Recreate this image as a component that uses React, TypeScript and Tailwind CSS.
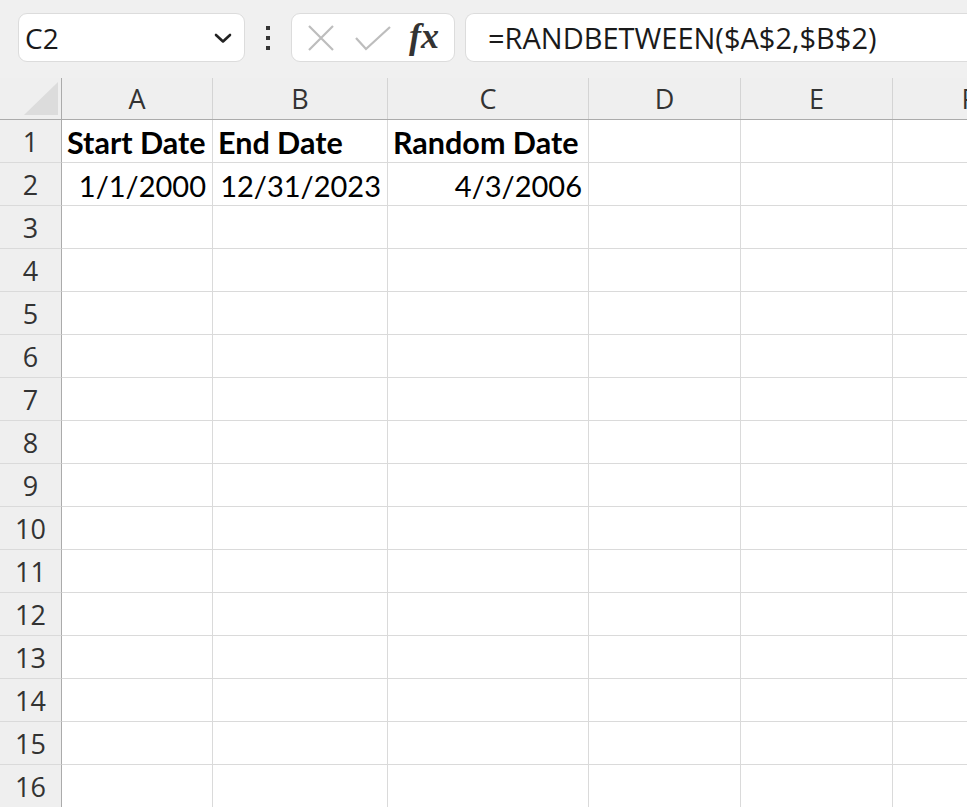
import React from "react";

const cols = [
  { name: "A", w: 151 },
  { name: "B", w: 175 },
  { name: "C", w: 201 },
  { name: "D", w: 152 },
  { name: "E", w: 152 },
  { name: "F", w: 152 },
];

const ui = { fontFamily: '"Open Sans", "Noto Sans", sans-serif' };
const cellFont = { fontFamily: 'Lato, "Open Sans", sans-serif' };

type Cell = { text: string; bold?: boolean; right?: boolean };

const data: Record<number, Cell[]> = {
  1: [
    { text: "Start Date", bold: true },
    { text: "End Date", bold: true },
    { text: "Random Date", bold: true },
  ],
  2: [
    { text: "1/1/2000", right: true },
    { text: "12/31/2023", right: true },
    { text: "4/3/2006", right: true },
  ],
};

function Toolbar() {
  return (
    <div className="h-[78px] bg-[#f0f0f0] flex items-start pt-[13px] pl-[18px]" style={ui}>
      <div className="w-[227px] h-[49px] bg-white border border-[#dcdcdc] rounded-[9px] flex items-center justify-between pl-[6px] pr-[12px]">
        <span className="text-[28px] text-[#1a1a1a] leading-none">C2</span>
        <svg width="18" height="12" viewBox="0 0 18 12">
          <path d="M2 3 L9 9.5 L16 3" fill="none" stroke="#222" strokeWidth="2.6" strokeLinecap="round" strokeLinejoin="round" />
        </svg>
      </div>
      <div className="w-[46px] h-[49px] flex flex-col items-center justify-center gap-[6px]">
        <span className="w-[4px] h-[4px] bg-[#333]" />
        <span className="w-[4px] h-[4px] bg-[#333]" />
        <span className="w-[4px] h-[4px] bg-[#333]" />
      </div>
      <div className="w-[164px] h-[49px] bg-white border border-[#dcdcdc] rounded-[9px] flex items-center pl-[14px]">
        <svg width="30" height="30" viewBox="0 0 30 30">
          <path d="M3 3 L27 27 M27 3 L3 27" stroke="#bdbdbd" strokeWidth="2.2" fill="none" />
        </svg>
        <svg width="38" height="30" viewBox="0 0 38 30" className="ml-[18px]">
          <path d="M2 15 L12 26 L36 4" stroke="#bdbdbd" strokeWidth="2.2" fill="none" />
        </svg>
        <span
          className="ml-[17px] text-[36px] italic font-bold text-[#333] leading-none -mt-[4px]"
          style={{ fontFamily: '"Liberation Serif", "DejaVu Serif", serif' }}
        >
          fx
        </span>
      </div>
      <div className="ml-[10px] flex-1 h-[49px] bg-white border border-[#dcdcdc] border-r-0 rounded-l-[9px] flex items-center pl-[22px]">
        <span className="text-[29px] text-[#1a1a1a] leading-none">=RANDBETWEEN($A$2,$B$2)</span>
      </div>
    </div>
  );
}

function Grid() {
  const rows = Array.from({ length: 16 }, (_, i) => i + 1);
  return (
    <div className="flex flex-col bg-white" style={ui}>
      <div className="flex h-[42px] bg-[#efefef] border-b border-[#ababab]">
        <div className="w-[62px] shrink-0 border-r border-[#ababab] relative">
          <svg width="40" height="40" viewBox="0 0 40 40" className="absolute left-[22px] top-[1px]">
            <path d="M36 3 L36 36 L2 36 Z" fill="#dcdcdc" />
          </svg>
        </div>
        {cols.map((c) => (
          <div
            key={c.name}
            className="shrink-0 border-r border-[#d4d4d4] flex items-center justify-center text-[27px] text-[#333] pt-[2px]"
            style={{ width: c.w }}
          >
            {c.name}
          </div>
        ))}
      </div>
      {rows.map((r) => (
        <div key={r} className="flex h-[43px] shrink-0">
          <div className="w-[62px] shrink-0 bg-[#efefef] border-r border-[#ababab] border-b border-b-[#dadada] flex items-center justify-center text-[27px] text-[#333] pt-[2px]">
            {r}
          </div>
          {cols.map((c, i) => {
            const cell = data[r]?.[i];
            return (
              <div
                key={c.name}
                className={
                  "shrink-0 border-r border-b border-[#dadada] flex items-center px-[5px] text-black whitespace-nowrap pt-[3px] " +
                  (cell?.right ? "justify-end text-[29px] pr-[6px] " : "justify-start ") +
                  (cell?.bold ? "font-bold text-[30.5px]" : "")
                }
                style={{ width: c.w, ...cellFont }}
              >
                {cell?.text}
              </div>
            );
          })}
        </div>
      ))}
    </div>
  );
}

export default function App() {
  return (
    <div className="w-[967px] h-[807px] overflow-hidden bg-[#f0f0f0]">
      <Toolbar />
      <Grid />
    </div>
  );
}
